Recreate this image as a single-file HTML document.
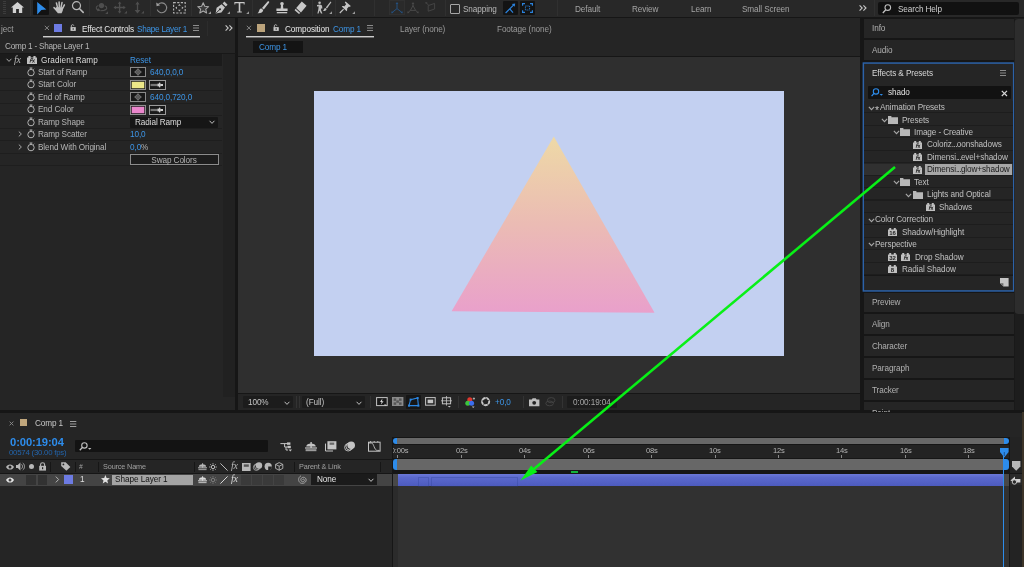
<!DOCTYPE html>
<html><head><meta charset="utf-8"><title>After Effects</title>
<style>
*{box-sizing:border-box;margin:0;padding:0}
html,body{width:1024px;height:567px;overflow:hidden;background:#161616}
body{position:relative;font-family:"Liberation Sans",sans-serif;font-size:8.2px;color:#b4b4b4;line-height:10px;-webkit-font-smoothing:antialiased}
.a{position:absolute}
.t{position:absolute;white-space:nowrap;line-height:10px;height:10px}
.w{color:#e0e0e0}
.b{color:#3d95e6}
.d{color:#8a8a8a}
svg{position:absolute;overflow:visible}
.t{will-change:transform}
/* regions */
#toolbar{left:0;top:0;width:1024px;height:17px;background:#282828}
#left{left:0;top:18px;width:235px;height:392px;background:#252525}
#comp{left:238px;top:18px;width:622px;height:392px;background:#252525}
#viewer{left:238px;top:57px;width:622px;height:335.5px;background:#2f2f2f}
#right{left:862px;top:18px;width:162px;height:392px;background:#161616}
#timeline{left:0;top:412px;width:1024px;height:155px;background:#252525}
.rp{left:0;width:152px;height:20px;background:#232323}
.row{left:0;width:100%;height:12px}
.sep{top:0;width:1px;height:16px;background:#303030}
.t{letter-spacing:-0.1px;margin-top:1px}
</style></head><body>

<!-- ============ TOOLBAR ============ -->
<div id="toolbar" class="a">
<!-- grip -->
<div class="a" style="left:3px;top:1px;width:3px;height:14px;background:repeating-linear-gradient(#3c3c3c 0 1px,#282828 1px 2px)"></div>
<!-- separators -->
<div class="a sep" style="left:30px"></div><div class="a sep" style="left:89px"></div><div class="a sep" style="left:150px"></div>
<div class="a sep" style="left:191px"></div><div class="a sep" style="left:252px"></div><div class="a sep" style="left:312px"></div>
<div class="a sep" style="left:335px"></div><div class="a sep" style="left:374px"></div><div class="a sep" style="left:445px"></div>
<div class="a sep" style="left:557px"></div><div class="a sep" style="left:874px"></div>
<!-- home -->
<svg style="left:11px;top:2px" width="13" height="11" viewBox="0 0 13 11"><path d="M6.5 0 L13 5.6 H11.2 V11 H7.9 V7 H5.1 V11 H1.8 V5.6 H0 Z" fill="#d2d2d2"/></svg>
<!-- selection tool -->
<div class="a" style="left:33px;top:0;width:16px;height:15px;background:#121212;border-radius:1px"></div>
<svg style="left:37px;top:1.6px" width="10" height="13" viewBox="0 0 10 13"><path d="M0.2 0 L9.4 7.6 L4.4 8 L0.2 12.4 Z" fill="#2d8ceb"/></svg>
<!-- hand -->
<svg style="left:53px;top:1px" width="13" height="13" viewBox="0 0 13 13"><g stroke="#bebebe" stroke-width="1.5" stroke-linecap="round" fill="none"><path d="M4.6 6.6 L3.4 1.9"/><path d="M6.3 6.2 L6.1 0.9"/><path d="M8 6.4 L9 1.6"/><path d="M9.6 7.4 L11.4 3.8"/><path d="M3.8 9.4 L1 6.6"/></g><path d="M3.6 6 L10.2 6.6 C10 9.4 9.4 11 8.6 12.2 H4.8 C3.6 10.8 2.4 9.4 1.8 7.6 Z" fill="#bebebe"/></svg>
<!-- zoom -->
<svg style="left:71px;top:0.2px" width="14" height="14" viewBox="0 0 14 14"><circle cx="5.5" cy="5.7" r="4" fill="none" stroke="#b8b8b8" stroke-width="1.2"/><path d="M8.6 8.8 L12.2 12.4" stroke="#b8b8b8" stroke-width="1.6" stroke-linecap="round"/></svg>
<!-- orbit (dim) -->
<svg style="left:95px;top:1px" width="14" height="14" viewBox="0 0 14 14"><circle cx="6.5" cy="4.6" r="2.6" fill="#4e4e4e"/><path d="M3.4 4.5 C0.3 5.6 0.6 8.2 3.6 9.2 M2.2 9.6 L4.4 9.4 L3.2 7.6 M9.6 4.8 C12.6 5.6 12.6 8.6 9 9.4 L5.5 9.8" fill="none" stroke="#4e4e4e" stroke-width="1.1"/><path d="M13 10.2 V13 H10.2 Z" fill="#4e4e4e"/></svg>
<!-- pan (dim) -->
<svg style="left:114px;top:2px" width="14" height="13" viewBox="0 0 14 13"><path d="M5.6 0.8 V10.2 M0.9 5.5 H10.3" stroke="#4e4e4e" stroke-width="1.3"/><path d="M5.6 -0.6 L7.4 1.8 H3.8 Z M5.6 11.6 L7.4 9.2 H3.8 Z M-0.5 5.5 L1.9 3.7 V7.3 Z M11.7 5.5 L9.3 3.7 V7.3 Z" fill="#4e4e4e"/><path d="M13 8.8 V11.6 H10.2 Z" fill="#4e4e4e"/></svg>
<!-- dolly (dim) -->
<svg style="left:133px;top:2px" width="14" height="13" viewBox="0 0 14 13"><path d="M4.5 1 V10" stroke="#4e4e4e" stroke-width="1.3"/><path d="M4.5 -0.4 L6.6 2.6 H2.4 Z M4.5 11.6 L7.4 8 H1.6 Z" fill="#4e4e4e"/><path d="M11 8.8 V11.6 H8.2 Z" fill="#4e4e4e"/></svg>
<!-- rotate -->
<svg style="left:155px;top:1px" width="14" height="14" viewBox="0 0 14 14"><path d="M3.2 3.4 A4.9 4.9 0 1 1 2.2 8.6" fill="none" stroke="#8c8c8c" stroke-width="1.1"/><path d="M1.2 1.4 L1.6 5.2 L5.2 4.2 Z" fill="#a0a0a0"/></svg>
<!-- pan behind -->
<svg style="left:173px;top:2px" width="13" height="12" viewBox="0 0 13 12"><rect x="0.6" y="0.6" width="11.6" height="10.4" fill="none" stroke="#b4b4b4" stroke-width="1.1" stroke-dasharray="2.2 1.4"/><path d="M6.4 2 L7.8 3.8 H5 Z M6.4 9.6 L7.8 7.8 H5 Z M2.2 5.8 L4 4.4 V7.2 Z M10.6 5.8 L8.8 4.4 V7.2 Z" fill="#b4b4b4"/></svg>
<!-- star -->
<svg style="left:196px;top:1px" width="16" height="14" viewBox="0 0 16 14"><g transform="translate(7.2 6.9) scale(0.88) translate(-7 -6.6)"><path d="M7 0.8 L8.8 4.8 L13.2 5.2 L9.9 8.1 L10.9 12.4 L7 10.1 L3.1 12.4 L4.1 8.1 L0.8 5.2 L5.2 4.8 Z" fill="#3c3c3c" stroke="#a8a8a8" stroke-width="1.2" stroke-linejoin="round"/></g><path d="M15 10.2 V13 H12.2 Z" fill="#9a9a9a"/></svg>
<!-- pen -->
<svg style="left:215px;top:1px" width="16" height="14" viewBox="0 0 16 14"><path d="M0.6 12.6 L1.6 6.8 L6.6 3.2 L10 6.6 L6.4 11.6 Z" fill="#c4c4c4"/><path d="M0.8 12.4 L4.6 8.6" stroke="#262626" stroke-width="0.9"/><circle cx="5" cy="8.2" r="1" fill="#262626"/><path d="M7.6 2.4 L9.4 0.6 L12.6 3.8 L10.8 5.6 Z" fill="#c4c4c4"/><path d="M15 10.2 V13 H12.2 Z" fill="#9a9a9a"/></svg>
<!-- T -->
<svg style="left:234px;top:2px" width="16" height="13" viewBox="0 0 16 13"><path d="M0.4 0 H10.6 V2.6 H9.7 V1.2 H6.3 V9.6 H7.8 V10.6 H3.2 V9.6 H4.7 V1.2 H1.3 V2.6 H0.4 Z" fill="#c8c8c8"/><path d="M15 9.2 V12 H12.2 Z" fill="#9a9a9a"/></svg>
<!-- brush -->
<svg style="left:257px;top:1px" width="13" height="13" viewBox="0 0 13 13"><path d="M11.6 0.3 C12.4 0.6 12.4 1.2 12 1.8 L6.8 8.4 L5 7 L10.4 0.8 C10.8 0.3 11.2 0.2 11.6 0.3 Z" fill="#c8c8c8"/><path d="M4.4 7.6 L6.2 9 C6 11.4 3.4 12.6 0.4 12.2 C1.6 11.4 1.8 10.6 2.2 9.4 C2.6 8.2 3.4 7.6 4.4 7.6 Z" fill="#c8c8c8"/></svg>
<!-- stamp -->
<svg style="left:276px;top:2px" width="12" height="12" viewBox="0 0 12 12"><circle cx="6" cy="1.8" r="1.8" fill="#c8c8c8"/><path d="M5 3 H7 L7.3 6.6 H11.6 V9 H0.4 V6.6 H4.7 Z" fill="#c8c8c8"/><rect x="0.8" y="10" width="10.4" height="1.3" fill="#c8c8c8"/></svg>
<!-- eraser -->
<svg style="left:294px;top:1px" width="13" height="13" viewBox="0 0 13 13"><path d="M7.8 0.4 L12.6 4.8 L7 11.4 L2.2 7 Z" fill="#c8c8c8"/><path d="M1.6 7.8 L6.2 12 L5 13 L0.6 9.2 Z" fill="#c8c8c8"/></svg>
<!-- roto -->
<svg style="left:316px;top:1px" width="17" height="14" viewBox="0 0 17 14"><circle cx="3.6" cy="1.8" r="1.3" fill="#bcbcbc"/><path d="M1 4 L4 3.4 L6 4.6 L6.4 7.6 L5.2 7.6 L5 9 L6.4 12.4 H5 L3.4 9.4 L2.6 12.4 H1.4 L2.4 8 L2.6 5.2 L1 5.4 Z" fill="#bcbcbc"/><path d="M14.6 0.6 L15.4 1.2 L11 7.4 L9.8 6.6 Z" fill="#bcbcbc"/><path d="M9.4 7 L10.6 8 C10.4 9.8 8.6 10.4 6.8 10 C7.8 9.4 7.8 8.6 8.2 7.8 C8.5 7.2 9 7 9.4 7 Z" fill="#bcbcbc"/><path d="M16 10.2 V13 H13.2 Z" fill="#9a9a9a"/></svg>
<!-- pin -->
<svg style="left:339px;top:1px" width="17" height="14" viewBox="0 0 17 14"><path d="M6.6 0.6 L11.8 5.2 L10.8 6.2 L10 5.8 L8 8 C8.4 9 8.2 9.8 7.6 10.4 L2.8 5.8 C3.6 5.2 4.4 5.2 5.2 5.6 L7.2 3.4 L5.8 1.6 Z" fill="#c4c4c4" transform="translate(0 -0.2)"/><path d="M4.6 8.2 L0.8 12" stroke="#c4c4c4" stroke-width="1.2"/><path d="M16 10.2 V13 H13.2 Z" fill="#9a9a9a"/></svg>
<!-- axis modes -->
<div class="a" style="left:389px;top:0;width:16px;height:15px;border:1px solid #303030;background:#2a2a2a"></div>
<svg style="left:391px;top:2px" width="13" height="12" viewBox="0 0 13 12"><path d="M6 1 V6.6 L1.2 10.4 M6 6.6 L10.8 10.4" fill="none" stroke="#24507f" stroke-width="1"/><path d="M6 0 L7.4 2 H4.6 Z M0.2 11.2 L0.8 8.9 L2.5 11 Z M11.8 11.2 L11.2 8.9 L9.5 11 Z" fill="#24507f"/></svg>
<svg style="left:407px;top:2px" width="13" height="12" viewBox="0 0 13 12"><path d="M6 1 V4 M3.8 8 L1.2 10.4 M8.2 8 L10.8 10.4 M6 3.6 L3.4 8.4 H8.6 Z" fill="none" stroke="#484848" stroke-width="1"/><path d="M6 0 L7.4 2 H4.6 Z M0.2 11.2 L0.8 8.9 L2.5 11 Z M11.8 11.2 L11.2 8.9 L9.5 11 Z" fill="#484848"/></svg>
<svg style="left:425px;top:2px" width="12" height="11" viewBox="0 0 12 11"><path d="M1 0.6 L3.4 3 M3.2 3.6 L9.6 1.4 V7 L3.2 9.2 Z" fill="none" stroke="#444" stroke-width="1"/><path d="M0.4 0 L2.6 0.4 L0.8 2.2 Z" fill="#444"/></svg>
<!-- snapping -->
<div class="a" style="left:450px;top:4px;width:10px;height:10px;border:1.3px solid #a6a6a6;border-radius:1px"></div>
<div class="t" style="left:463px;top:4px;color:#b8b8b8">Snapping</div>
<div class="a" style="left:503px;top:1px;width:15px;height:14px;background:#131313;border-radius:1px"></div>
<svg style="left:505px;top:3px" width="11" height="11" viewBox="0 0 11 11"><path d="M0.6 10 L9 1.6 M4.8 5.8 L8 9.6" fill="none" stroke="#2b82dc" stroke-width="1.2"/><path d="M10.2 0.4 L9.6 3.8 L6.8 1 Z" fill="#2b82dc"/></svg>
<div class="a" style="left:520px;top:1px;width:15px;height:14px;background:#131313;border-radius:1px"></div>
<svg style="left:522px;top:3px" width="11" height="10" viewBox="0 0 11 10"><path d="M0.6 2.8 V0.6 H3 M8 0.6 H10.4 V2.8 M10.4 7.2 V9.4 H8 M3 9.4 H0.6 V7.2" fill="none" stroke="#2b82dc" stroke-width="1.2"/><rect x="3.4" y="3" width="4.2" height="4" fill="none" stroke="#2b82dc" stroke-width="0.9" stroke-dasharray="1.2 0.8"/></svg>
<!-- workspaces -->
<div class="t" style="left:575px;top:4px;color:#a4a4a4">Default</div>
<div class="t" style="left:632px;top:4px;color:#a4a4a4">Review</div>
<div class="t" style="left:691px;top:4px;color:#a4a4a4">Learn</div>
<div class="t" style="left:742px;top:4px;color:#a4a4a4">Small Screen</div>
<svg style="left:859px;top:5px" width="8" height="6" viewBox="0 0 8 6"><path d="M0.6 0.4 L3.2 3 L0.6 5.6 M4.4 0.4 L7 3 L4.4 5.6" fill="none" stroke="#c8c8c8" stroke-width="1.1"/></svg>
<!-- search help -->
<div class="a" style="left:878px;top:2px;width:141px;height:13px;background:#111;border-radius:2px"></div>
<svg style="left:882px;top:4px" width="10" height="10" viewBox="0 0 10 10"><circle cx="5.8" cy="3.6" r="2.8" fill="none" stroke="#c0c0c0" stroke-width="1.1"/><path d="M3.8 5.8 L0.8 9" stroke="#c0c0c0" stroke-width="1.3"/></svg>
<div class="t" style="left:898px;top:4px;color:#d0d0d0">Search Help</div>
</div>

<!-- ============ LEFT PANEL ============ -->
<div id="left" class="a">
<!-- tab header (coords relative to panel: top=18) -->
<div class="t" style="left:1.2px;top:5.7px;color:#a0a0a0">ject</div>
<svg style="left:44px;top:7px" width="6" height="6" viewBox="0 0 6 6"><path d="M0.8 0.8 L5 5 M5 0.8 L0.8 5" stroke="#8c8c8c" stroke-width="0.9"/></svg>
<div class="a" style="left:54px;top:6px;width:8px;height:8px;background:#6d7be3"></div>
<svg style="left:70px;top:5.6px" width="6.6" height="7.4" viewBox="0 0 8 9"><path d="M1.6 4 V2.2 C1.6 0.4 4.6 0.4 4.6 2" fill="none" stroke="#c8c8c8" stroke-width="1"/><rect x="0.6" y="3.8" width="6.4" height="4.6" fill="#c8c8c8"/><rect x="3.2" y="5.2" width="1.3" height="1.8" fill="#222"/></svg>
<div class="t w" style="left:82px;top:5.7px;color:#eaeaea">Effect Controls</div>
<div class="t b" style="left:137px;top:5.7px;letter-spacing:-0.25px">Shape Layer 1</div>
<svg style="left:193px;top:7px" width="6.0" height="6" viewBox="0 0 6.0 6"><path d="M0 0.5 H6.0 M0 3 H6.0 M0 5.5 H6.0" stroke="#8c8c8c" stroke-width="1"/></svg>
<div class="a" style="left:207px;top:3px;width:1px;height:15px;background:#2c2c2c"></div>
<svg style="left:225px;top:7px" width="8" height="6" viewBox="0 0 8 6"><path d="M0.6 0.4 L3.2 3 L0.6 5.6 M4.4 0.4 L7 3 L4.4 5.6" fill="none" stroke="#c8c8c8" stroke-width="1.1"/></svg>
<div class="a" style="left:43px;top:18px;width:157px;height:1px;background:#cccccc"></div><div class="a" style="left:43px;top:19px;width:157px;height:1px;background:#6e6e6e"></div>
<!-- content -->
<div class="a" style="left:222.6px;top:35.5px;width:12.4px;height:343px;background:#212121"></div>
<div class="t" style="left:5px;top:23px;color:#b6b6b6;letter-spacing:-0.22px">Comp 1 - Shape Layer 1</div>
<div class="a" style="left:0;top:34.5px;width:236px;height:1px;background:#181818"></div>
<div id="fxrows" class="a" style="left:0;top:35.5px;width:222px;height:113px;background:repeating-linear-gradient(#252525 0 11.45px,#1e1e1e 11.45px 12.45px)"></div>
<div class="a" style="left:0;top:35.5px;width:222px;height:12px;background:#1b1b1b"></div>
<svg style="left:6px;top:40.0px" width="6" height="5" viewBox="0 0 6 5"><path d="M0.6 0.8 L3 3.4 L5.4 0.8" fill="none" stroke="#a8a8a8" stroke-width="1"/></svg>
<div class="t" style="left:14px;top:36.0px;font-family:'Liberation Serif',serif;font-style:italic;font-size:10px;color:#b4b4b4;letter-spacing:-0.4px">fx</div>
<svg style="left:27px;top:37.7px" width="10" height="8" viewBox="0 0 10 8"><path d="M0 1.4 H1.4 V0 H3.6 V1.4 H6.4 V0 H8.6 V1.4 H10 V8 H0 Z" fill="#c0c0c0"/><path d="M3 6.6 L4 2.6 H6.2 M3.4 4.4 H5.6 M5.4 6.6 L7.6 3.4 M5.6 3.4 L7.4 6.6" stroke="#1b1b1b" stroke-width="0.8" fill="none"/></svg>
<div class="t" style="left:41px;top:36.5px;color:#dadada;letter-spacing:0.11px">Gradient Ramp</div>
<div class="t b" style="left:130px;top:36.5px">Reset</div>
<svg style="left:27px;top:48.95px" width="8" height="10" viewBox="0 0 8 10"><circle cx="4" cy="5.6" r="3.2" fill="none" stroke="#b0b0b0" stroke-width="1"/><path d="M2.6 1 H5.4 M4 1 V2.4 M6.4 2.6 L7.2 1.8" stroke="#b0b0b0" stroke-width="1" fill="none"/></svg>
<div class="t" style="left:38px;top:48.95px;color:#b6b6b6">Start of Ramp</div>
<svg style="left:27px;top:61.4px" width="8" height="10" viewBox="0 0 8 10"><circle cx="4" cy="5.6" r="3.2" fill="none" stroke="#b0b0b0" stroke-width="1"/><path d="M2.6 1 H5.4 M4 1 V2.4 M6.4 2.6 L7.2 1.8" stroke="#b0b0b0" stroke-width="1" fill="none"/></svg>
<div class="t" style="left:38px;top:61.4px;color:#b6b6b6">Start Color</div>
<svg style="left:27px;top:73.85px" width="8" height="10" viewBox="0 0 8 10"><circle cx="4" cy="5.6" r="3.2" fill="none" stroke="#b0b0b0" stroke-width="1"/><path d="M2.6 1 H5.4 M4 1 V2.4 M6.4 2.6 L7.2 1.8" stroke="#b0b0b0" stroke-width="1" fill="none"/></svg>
<div class="t" style="left:38px;top:73.85px;color:#b6b6b6">End of Ramp</div>
<svg style="left:27px;top:86.3px" width="8" height="10" viewBox="0 0 8 10"><circle cx="4" cy="5.6" r="3.2" fill="none" stroke="#b0b0b0" stroke-width="1"/><path d="M2.6 1 H5.4 M4 1 V2.4 M6.4 2.6 L7.2 1.8" stroke="#b0b0b0" stroke-width="1" fill="none"/></svg>
<div class="t" style="left:38px;top:86.3px;color:#b6b6b6">End Color</div>
<svg style="left:27px;top:98.75px" width="8" height="10" viewBox="0 0 8 10"><circle cx="4" cy="5.6" r="3.2" fill="none" stroke="#b0b0b0" stroke-width="1"/><path d="M2.6 1 H5.4 M4 1 V2.4 M6.4 2.6 L7.2 1.8" stroke="#b0b0b0" stroke-width="1" fill="none"/></svg>
<div class="t" style="left:38px;top:98.75px;color:#b6b6b6">Ramp Shape</div>
<svg style="left:27px;top:111.2px" width="8" height="10" viewBox="0 0 8 10"><circle cx="4" cy="5.6" r="3.2" fill="none" stroke="#b0b0b0" stroke-width="1"/><path d="M2.6 1 H5.4 M4 1 V2.4 M6.4 2.6 L7.2 1.8" stroke="#b0b0b0" stroke-width="1" fill="none"/></svg>
<div class="t" style="left:38px;top:111.2px;color:#b6b6b6">Ramp Scatter</div>
<svg style="left:18px;top:113.4px" width="5" height="6" viewBox="0 0 5 6"><path d="M0.8 0.6 L3.4 3 L0.8 5.4" fill="none" stroke="#a8a8a8" stroke-width="1"/></svg>
<svg style="left:27px;top:123.65px" width="8" height="10" viewBox="0 0 8 10"><circle cx="4" cy="5.6" r="3.2" fill="none" stroke="#b0b0b0" stroke-width="1"/><path d="M2.6 1 H5.4 M4 1 V2.4 M6.4 2.6 L7.2 1.8" stroke="#b0b0b0" stroke-width="1" fill="none"/></svg>
<div class="t" style="left:38px;top:123.65px;color:#b6b6b6">Blend With Original</div>
<svg style="left:18px;top:125.85000000000001px" width="5" height="6" viewBox="0 0 5 6"><path d="M0.8 0.6 L3.4 3 L0.8 5.4" fill="none" stroke="#a8a8a8" stroke-width="1"/></svg>
<div class="a" style="left:130px;top:49.15px;width:16px;height:10px;border:1px solid #8a8a8a;background:#181818"></div>
<svg style="left:134px;top:50.15px" width="8" height="8" viewBox="0 0 8 8"><circle cx="4" cy="4" r="2.3" fill="none" stroke="#b4b4b4" stroke-width="0.6"/><path d="M4 0.2 V7.8 M0.2 4 H7.8" stroke="#b4b4b4" stroke-width="0.5"/></svg>
<div class="t b" style="left:150px;top:48.949999999999996px">640,0,0,0</div>
<div class="a" style="left:130px;top:61.6px;width:16px;height:10px;border:1px solid #8e8e8e;box-shadow:inset 0 0 0 0.7px #1c1c1c;background:#ece788"></div>
<div class="a" style="left:148.5px;top:61.6px;width:17px;height:10px;border:1px solid #9a9a9a;background:#1a1a1a"></div>
<svg style="left:150px;top:63.6px" width="14" height="6" viewBox="0 0 14 6"><path d="M0.5 2.4 H8 M0.5 3.6 H8" stroke="#c8c8c8" stroke-width="0.6"/><rect x="7.6" y="1.6" width="3" height="2.8" fill="#d0d0d0"/><rect x="9" y="0.6" width="1.2" height="4.8" fill="#d0d0d0"/><rect x="10.4" y="2" width="2.6" height="2" fill="#d0d0d0"/></svg>
<div class="a" style="left:130px;top:74.05px;width:16px;height:10px;border:1px solid #8a8a8a;background:#181818"></div>
<svg style="left:134px;top:75.05px" width="8" height="8" viewBox="0 0 8 8"><circle cx="4" cy="4" r="2.3" fill="none" stroke="#b4b4b4" stroke-width="0.6"/><path d="M4 0.2 V7.8 M0.2 4 H7.8" stroke="#b4b4b4" stroke-width="0.5"/></svg>
<div class="t b" style="left:150px;top:73.85px">640,0,720,0</div>
<div class="a" style="left:130px;top:86.5px;width:16px;height:10px;border:1px solid #8e8e8e;box-shadow:inset 0 0 0 0.7px #1c1c1c;background:#ea86cc"></div>
<div class="a" style="left:148.5px;top:86.5px;width:17px;height:10px;border:1px solid #9a9a9a;background:#1a1a1a"></div>
<svg style="left:150px;top:88.5px" width="14" height="6" viewBox="0 0 14 6"><path d="M0.5 2.4 H8 M0.5 3.6 H8" stroke="#c8c8c8" stroke-width="0.6"/><rect x="7.6" y="1.6" width="3" height="2.8" fill="#d0d0d0"/><rect x="9" y="0.6" width="1.2" height="4.8" fill="#d0d0d0"/><rect x="10.4" y="2" width="2.6" height="2" fill="#d0d0d0"/></svg>
<div class="a" style="left:130px;top:98.55px;width:88px;height:11px;background:#161616;border-radius:1px"></div>
<div class="t" style="left:135px;top:98.75px;color:#dcdcdc">Radial Ramp</div>
<svg style="left:209px;top:102.15px" width="6" height="5" viewBox="0 0 6 5"><path d="M0.6 0.8 L3 3.4 L5.4 0.8" fill="none" stroke="#c0c0c0" stroke-width="1"/></svg>
<div class="t b" style="left:130px;top:111.2px">10,0</div>
<div class="t b" style="left:130px;top:123.65px">0,0<span style="color:#b0b0b0">%</span></div>
<div class="a" style="left:130px;top:136px;width:88.5px;height:11px;border:1px solid #8c8c8c;background:#1d1d1d"></div>
<div class="t" style="left:130px;top:136.5px;width:88px;text-align:center;color:#b4b4b4">Swap Colors</div>
</div>

<!-- ============ COMP PANEL ============ -->
<div id="comp" class="a">
<!-- header; coords relative to (238,18) -->
<svg style="left:8px;top:7px" width="6" height="6" viewBox="0 0 6 6"><path d="M0.8 0.8 L5 5 M5 0.8 L0.8 5" stroke="#8c8c8c" stroke-width="0.9"/></svg>
<div class="a" style="left:19px;top:6px;width:8px;height:8px;background:#bca47c"></div>
<svg style="left:35px;top:5.6px" width="6.6" height="7.4" viewBox="0 0 8 9"><path d="M1.6 4 V2.2 C1.6 0.4 4.6 0.4 4.6 2" fill="none" stroke="#c8c8c8" stroke-width="1"/><rect x="0.6" y="3.8" width="6.4" height="4.6" fill="#c8c8c8"/><rect x="3.2" y="5.2" width="1.3" height="1.8" fill="#222"/></svg>
<div class="t" style="left:47px;top:5.7px;color:#eaeaea">Composition</div>
<div class="t b" style="left:95px;top:5.7px">Comp 1</div>
<svg style="left:129px;top:7px" width="6.0" height="6" viewBox="0 0 6.0 6"><path d="M0 0.5 H6.0 M0 3 H6.0 M0 5.5 H6.0" stroke="#8c8c8c" stroke-width="1"/></svg>
<div class="a" style="left:8px;top:18px;width:128px;height:1px;background:#cccccc"></div><div class="a" style="left:8px;top:19px;width:128px;height:1px;background:#6e6e6e"></div>
<div class="t" style="left:162px;top:5.7px;color:#9a9a9a">Layer (none)</div>
<div class="t" style="left:259px;top:5.7px;color:#9a9a9a">Footage (none)</div>
<!-- sub tab -->
<div class="a" style="left:15px;top:23px;width:50px;height:11.5px;background:#141414"></div>
<div class="t b" style="left:21px;top:23.5px">Comp 1</div>
<div class="a" style="left:0;top:38px;width:622px;height:1px;background:#161616"></div>
<!-- bottom bar : relative top = y-18 -->
<div class="a" style="left:0;top:374.5px;width:622px;height:1px;background:#161616"></div>
<div class="a" style="left:5px;top:377.5px;width:50px;height:12.5px;background:#1c1c1c;border-radius:1px"></div>
<div class="t" style="left:9.5px;top:378.5px;color:#c4c4c4">100%</div>
<svg style="left:46px;top:382.5px" width="6" height="5" viewBox="0 0 6 5"><path d="M0.6 0.8 L3 3.4 L5.4 0.8" fill="none" stroke="#c0c0c0" stroke-width="1"/></svg>
<div class="a" style="left:57.5px;top:378px;width:1px;height:12px;background:#333"></div>
<div class="a" style="left:61px;top:378px;width:1px;height:12px;background:#333"></div>
<div class="a" style="left:64px;top:377.5px;width:63px;height:12.5px;background:#1c1c1c;border-radius:1px"></div>
<div class="t" style="left:67.5px;top:378.5px;color:#c4c4c4">(Full)</div>
<svg style="left:118px;top:382.5px" width="6" height="5" viewBox="0 0 6 5"><path d="M0.6 0.8 L3 3.4 L5.4 0.8" fill="none" stroke="#c0c0c0" stroke-width="1"/></svg>
<div class="a" style="left:131.5px;top:378px;width:1px;height:12px;background:#333"></div>
<!-- fast preview -->
<svg style="left:137.5px;top:379px" width="12" height="10" viewBox="0 0 12 10"><rect x="0.6" y="0.6" width="10.6" height="8" fill="#1a1a1a" stroke="#c4c4c4" stroke-width="1"/><path d="M6.4 1.6 L4 5 H5.6 L4.8 7.8 L7.6 4.2 H6 Z" fill="#d8d8d8"/><path d="M8 7.4 H10.4 L9.2 9 Z" fill="#d8d8d8"/></svg>
<!-- transparency grid -->
<svg style="left:154px;top:379px" width="12" height="10" viewBox="0 0 12 10"><rect x="0" y="0" width="11.4" height="9" fill="#8a8a8a"/><rect x="1.6" y="1.4" width="2.6" height="2.4" fill="#555"/><rect x="7" y="1.4" width="2.6" height="2.4" fill="#555"/><rect x="4.3" y="3.4" width="2.6" height="2.4" fill="#555"/><rect x="1.6" y="5.4" width="2.6" height="2.4" fill="#555"/><rect x="7" y="5.4" width="2.6" height="2.4" fill="#555"/></svg>
<!-- mask path (active) -->
<div class="a" style="left:168px;top:377px;width:15px;height:13.5px;background:#161616;border-radius:1px"></div>
<svg style="left:170px;top:379px" width="12" height="10" viewBox="0 0 12 10"><path d="M1 8.6 L2.6 2.6 L9.6 1 L10.4 8.6 Z" fill="none" stroke="#2b86e2" stroke-width="1.1"/><rect x="0" y="7.6" width="2" height="2" fill="#2b86e2"/><rect x="9.4" y="7.6" width="2" height="2" fill="#2b86e2"/><rect x="1.6" y="1.6" width="2" height="2" fill="#2b86e2"/><rect x="8.6" y="0" width="2" height="2" fill="#2b86e2"/></svg>
<!-- region of interest -->
<svg style="left:186.5px;top:379px" width="12" height="10" viewBox="0 0 12 10"><rect x="0.6" y="0.6" width="9.6" height="7.6" fill="none" stroke="#c4c4c4" stroke-width="1"/><rect x="2.6" y="2.6" width="5.6" height="3.6" fill="#c4c4c4"/></svg>
<!-- guides -->
<svg style="left:202.5px;top:378px" width="12" height="12" viewBox="0 0 12 12"><rect x="1.4" y="1.8" width="8.2" height="6" fill="none" stroke="#c4c4c4" stroke-width="1"/><path d="M5.5 0 V9.6 M0 4.8 H11" stroke="#c4c4c4" stroke-width="0.8"/><path d="M6.8 10 H9.8 L8.3 11.6 Z" fill="#c4c4c4"/></svg>
<div class="a" style="left:219.5px;top:378px;width:1px;height:12px;background:#333"></div>
<!-- RGB -->
<svg style="left:227px;top:378.5px" width="12" height="12" viewBox="0 0 12 12"><circle cx="4.8" cy="2.8" r="2.5" fill="#e0382e"/><circle cx="2.8" cy="6.2" r="2.5" fill="#3cc43c"/><circle cx="6.6" cy="6.2" r="2.5" fill="#3c6ef0"/><path d="M7.8 1.6 H10 M8.9 0.5 V2.7" stroke="#c4c4c4" stroke-width="0.8"/><path d="M6.8 9.6 H9.6 L8.2 11 Z" fill="#c4c4c4"/></svg>
<!-- aperture -->
<svg style="left:243px;top:379px" width="10" height="10" viewBox="0 0 10 10"><circle cx="4.6" cy="4.6" r="3.6" fill="none" stroke="#c8c8c8" stroke-width="1.9"/><path d="M4.6 0.4 L6 3.6 M8.6 3 L5.4 4.6 M7.6 7.6 L4.6 5.8 M2.6 8.4 L3.6 5.2 M0.6 4 L3.8 4.2" stroke="#232323" stroke-width="0.7"/></svg>
<div class="t b" style="left:257px;top:378.5px">+0,0</div>
<div class="a" style="left:284.5px;top:378px;width:1px;height:12px;background:#333"></div>
<!-- camera -->
<svg style="left:291px;top:379.5px" width="11" height="9" viewBox="0 0 11 9"><path d="M0 1.6 H2.8 L3.6 0.2 H6.8 L7.6 1.6 H10.4 V8.2 H0 Z" fill="#bdbdbd"/><circle cx="5.2" cy="4.8" r="1.9" fill="#232323"/></svg>
<svg style="left:307px;top:379px" width="11" height="10" viewBox="0 0 11 10"><ellipse cx="6.2" cy="3.2" rx="3.8" ry="2.6" fill="none" stroke="#444" stroke-width="0.9"/><ellipse cx="4.6" cy="6.4" rx="3.8" ry="2.4" fill="none" stroke="#444" stroke-width="0.9"/></svg>
<div class="a" style="left:323.5px;top:378px;width:1px;height:12px;background:#333"></div>
<div class="a" style="left:328.5px;top:377.5px;width:50px;height:12.5px;background:#1c1c1c;border-radius:1px"></div>
<div class="t" style="left:334.5px;top:378.5px;color:#a4a4a4">0:00:19:04</div>
</div>
<div id="viewer" class="a">
<div class="a" style="left:76px;top:34px;width:469.5px;height:264.5px;background:#c3d0f1"></div>
<svg style="left:0;top:0" width="622" height="335" viewBox="238 57 622 335"><defs><linearGradient id="tg" x1="0" y1="0" x2="0" y2="1"><stop offset="0" stop-color="#eed9a6"/><stop offset="0.5" stop-color="#ebbbb4"/><stop offset="1" stop-color="#e9a0cb"/></linearGradient></defs><polygon points="553.8,136.6 451.6,311.2 654.6,312.8" fill="url(#tg)"/></svg>
</div>

<!-- ============ RIGHT PANELS ============ -->
<div id="right" class="a">
<div class="a" style="left:1.5px;top:0.5px;width:150.5px;height:19.8px;background:#252525"></div>
<div class="t" style="left:9.5px;top:5.2px;color:#b0b0b0">Info</div>
<div class="a" style="left:1.5px;top:22px;width:150.5px;height:20.2px;background:#252525"></div>
<div class="t" style="left:9.5px;top:26.9px;color:#b0b0b0">Audio</div>
<div class="a" style="left:1px;top:45px;width:151px;height:228px;background:#252525"></div>
<svg style="left:0;top:0" width="162" height="392" viewBox="0 0 162 392"><rect x="1.35" y="45.05" width="150.3" height="227.9" fill="none" stroke="#2c62a8" stroke-width="1.5"/></svg>
<div class="t" style="left:9.5px;top:49.5px;color:#d8d8d8">Effects &amp; Presets</div>
<svg style="left:138px;top:52px" width="6.0" height="6" viewBox="0 0 6.0 6"><path d="M0 0.5 H6.0 M0 3 H6.0 M0 5.5 H6.0" stroke="#8c8c8c" stroke-width="1"/></svg>
<div class="a" style="left:5.5px;top:67.5px;width:143px;height:13.5px;background:#121212;border-radius:1px"></div>
<svg style="left:9px;top:70px" width="13" height="9" viewBox="0 0 13 9"><circle cx="5" cy="3.4" r="2.7" fill="none" stroke="#2d8ceb" stroke-width="1.1"/><path d="M3 5.4 L0.6 8.2" stroke="#2d8ceb" stroke-width="1.3"/><path d="M8.6 6 H12 L10.3 7.8 Z" fill="#2d8ceb"/></svg>
<div class="t" style="left:25.5px;top:69px;color:#e0e0e0">shado</div>
<svg style="left:139px;top:71.5px" width="7" height="7" viewBox="0 0 7 7"><path d="M0.8 0.8 L6 6 M6 0.8 L0.8 6" stroke="#d8d8d8" stroke-width="1.2"/></svg>
<div class="a" style="left:2px;top:83px;width:149px;height:174.3px;background:repeating-linear-gradient(#252525 0 11.2px,#1d1d1d 11.2px 12.45px)"></div>
<div class="a" style="left:2px;top:257px;width:149px;height:1.3px;background:#181818"></div>
<div class="a" style="left:2px;top:145.5px;width:149px;height:11.2px;background:#303030"></div>
<div class="a" style="left:62.8px;top:146px;width:87px;height:11px;background:#a6a6a6"></div>
<div class="t" style="left:18px;top:84.1px;color:#c0c0c0">Animation Presets</div>
<svg style="left:5.8px;top:87.5px" width="7" height="5.5" viewBox="0 0 6 5"><path d="M0.6 0.8 L3 3.4 L5.4 0.8" fill="none" stroke="#a8a8a8" stroke-width="1"/></svg>
<div class="t" style="left:12.5px;top:85.8px;color:#c0c0c0;font-size:10.5px">*</div>
<div class="t" style="left:40px;top:96.55px;color:#c0c0c0">Presets</div>
<svg style="left:18.7px;top:99.95px" width="7" height="5.5" viewBox="0 0 6 5"><path d="M0.6 0.8 L3 3.4 L5.4 0.8" fill="none" stroke="#a8a8a8" stroke-width="1"/></svg>
<svg style="left:26.4px;top:97.95px" width="10" height="8" viewBox="0 0 10 8"><path d="M0 0 H3.4 V1.2 H10 V8 H0 Z" fill="#b8b8b8"/></svg>
<div class="t" style="left:52px;top:109.0px;color:#c0c0c0">Image - Creative</div>
<svg style="left:30.7px;top:112.4px" width="7" height="5.5" viewBox="0 0 6 5"><path d="M0.6 0.8 L3 3.4 L5.4 0.8" fill="none" stroke="#a8a8a8" stroke-width="1"/></svg>
<svg style="left:38px;top:110.4px" width="10" height="8" viewBox="0 0 10 8"><path d="M0 0 H3.4 V1.2 H10 V8 H0 Z" fill="#b8b8b8"/></svg>
<div class="t" style="left:64.5px;top:121.45px;color:#c0c0c0">Coloriz<span style="letter-spacing:-0.6px">...</span>oonshadows</div>
<svg style="left:51.2px;top:122.65px" width="9" height="8" viewBox="0 0 9 8"><path d="M0 1.4 H1.2 V0 H3.2 V1.4 H5.8 V0 H7.8 V1.4 H9 V8 H0 Z" fill="#c0c0c0"/><path d="M3.2 6.8 L4 2.8 H5.8 M3.4 4.6 H5.2 M5 6.8 L7 3.8 M5.2 3.8 L6.8 6.8" stroke="#232323" stroke-width="0.8" fill="none"/></svg>
<div class="t" style="left:64.5px;top:133.9px;color:#c0c0c0">Dimensi<span style="letter-spacing:-0.6px">...</span>evel+shadow</div>
<svg style="left:51.2px;top:135.1px" width="9" height="8" viewBox="0 0 9 8"><path d="M0 1.4 H1.2 V0 H3.2 V1.4 H5.8 V0 H7.8 V1.4 H9 V8 H0 Z" fill="#c0c0c0"/><path d="M3.2 6.8 L4 2.8 H5.8 M3.4 4.6 H5.2 M5 6.8 L7 3.8 M5.2 3.8 L6.8 6.8" stroke="#232323" stroke-width="0.8" fill="none"/></svg>
<div class="t" style="left:64.5px;top:146.35px;color:#1a1a1a">Dimensi<span style="letter-spacing:-0.6px">...</span>glow+shadow</div>
<svg style="left:51.2px;top:147.55px" width="9" height="8" viewBox="0 0 9 8"><path d="M0 1.4 H1.2 V0 H3.2 V1.4 H5.8 V0 H7.8 V1.4 H9 V8 H0 Z" fill="#c0c0c0"/><path d="M3.2 6.8 L4 2.8 H5.8 M3.4 4.6 H5.2 M5 6.8 L7 3.8 M5.2 3.8 L6.8 6.8" stroke="#232323" stroke-width="0.8" fill="none"/></svg>
<div class="t" style="left:52px;top:158.8px;color:#c0c0c0">Text</div>
<svg style="left:30.7px;top:162.2px" width="7" height="5.5" viewBox="0 0 6 5"><path d="M0.6 0.8 L3 3.4 L5.4 0.8" fill="none" stroke="#a8a8a8" stroke-width="1"/></svg>
<svg style="left:38px;top:160.2px" width="10" height="8" viewBox="0 0 10 8"><path d="M0 0 H3.4 V1.2 H10 V8 H0 Z" fill="#b8b8b8"/></svg>
<div class="t" style="left:64.5px;top:171.25px;color:#c0c0c0">Lights and Optical</div>
<svg style="left:43.2px;top:174.65px" width="7" height="5.5" viewBox="0 0 6 5"><path d="M0.6 0.8 L3 3.4 L5.4 0.8" fill="none" stroke="#a8a8a8" stroke-width="1"/></svg>
<svg style="left:51px;top:172.65px" width="10" height="8" viewBox="0 0 10 8"><path d="M0 0 H3.4 V1.2 H10 V8 H0 Z" fill="#b8b8b8"/></svg>
<div class="t" style="left:76.8px;top:183.7px;color:#c0c0c0">Shadows</div>
<svg style="left:63.7px;top:184.9px" width="9" height="8" viewBox="0 0 9 8"><path d="M0 1.4 H1.2 V0 H3.2 V1.4 H5.8 V0 H7.8 V1.4 H9 V8 H0 Z" fill="#c0c0c0"/><path d="M3.2 6.8 L4 2.8 H5.8 M3.4 4.6 H5.2 M5 6.8 L7 3.8 M5.2 3.8 L6.8 6.8" stroke="#232323" stroke-width="0.8" fill="none"/></svg>
<div class="t" style="left:12.8px;top:196.15px;color:#c0c0c0">Color Correction</div>
<svg style="left:5.8px;top:199.55px" width="7" height="5.5" viewBox="0 0 6 5"><path d="M0.6 0.8 L3 3.4 L5.4 0.8" fill="none" stroke="#a8a8a8" stroke-width="1"/></svg>
<div class="t" style="left:39.5px;top:208.6px;color:#c0c0c0">Shadow/Highlight</div>
<svg style="will-change:transform;left:26.4px;top:209.8px" width="9" height="8" viewBox="0 0 9 8"><path d="M0 1.4 H1.2 V0 H3.2 V1.4 H5.8 V0 H7.8 V1.4 H9 V8 H0 Z" fill="#c0c0c0"/><text x="4.5" y="7" font-size="6" font-weight="bold" text-anchor="middle" fill="#232323" font-family="Liberation Sans, sans-serif">16</text></svg>
<div class="t" style="left:12.8px;top:221.05px;color:#c0c0c0">Perspective</div>
<svg style="left:5.8px;top:224.45px" width="7" height="5.5" viewBox="0 0 6 5"><path d="M0.6 0.8 L3 3.4 L5.4 0.8" fill="none" stroke="#a8a8a8" stroke-width="1"/></svg>
<div class="t" style="left:53px;top:233.5px;color:#c0c0c0">Drop Shadow</div>
<svg style="will-change:transform;left:26.4px;top:234.7px" width="9" height="8" viewBox="0 0 9 8"><path d="M0 1.4 H1.2 V0 H3.2 V1.4 H5.8 V0 H7.8 V1.4 H9 V8 H0 Z" fill="#c0c0c0"/><text x="4.5" y="7" font-size="6" font-weight="bold" text-anchor="middle" fill="#232323" font-family="Liberation Sans, sans-serif">32</text></svg>
<svg style="left:39px;top:234.7px" width="9" height="8" viewBox="0 0 9 8"><path d="M0 1.4 H1.2 V0 H3.2 V1.4 H5.8 V0 H7.8 V1.4 H9 V8 H0 Z" fill="#c0c0c0"/><path d="M3.2 6.8 L4 2.8 H5.8 M3.4 4.6 H5.2 M5 6.8 L7 3.8 M5.2 3.8 L6.8 6.8" stroke="#232323" stroke-width="0.8" fill="none"/></svg>
<div class="t" style="left:39.5px;top:245.95px;color:#c0c0c0">Radial Shadow</div>
<svg style="will-change:transform;left:26.4px;top:247.15px" width="9" height="8" viewBox="0 0 9 8"><path d="M0 1.4 H1.2 V0 H3.2 V1.4 H5.8 V0 H7.8 V1.4 H9 V8 H0 Z" fill="#c0c0c0"/><text x="4.5" y="7" font-size="6" font-weight="bold" text-anchor="middle" fill="#232323" font-family="Liberation Sans, sans-serif">8</text></svg>
<svg style="left:138px;top:260px" width="9" height="9" viewBox="0 0 9 9"><path d="M0 0 H8.6 V8.6 H3.4 L0 5.2 Z" fill="#c4c4c4"/><path d="M0 5.2 H3.4 V8.6 Z" fill="#6a6a6a"/></svg>
<div class="a" style="left:1.5px;top:275px;width:150.5px;height:18.6px;background:#252525"></div>
<div class="t" style="left:9.5px;top:279.1px;color:#b0b0b0">Preview</div>
<div class="a" style="left:1.5px;top:295.5px;width:150.5px;height:20.5px;background:#252525"></div>
<div class="t" style="left:9.5px;top:300.55px;color:#b0b0b0">Align</div>
<div class="a" style="left:1.5px;top:317.8px;width:150.5px;height:20.2px;background:#252525"></div>
<div class="t" style="left:9.5px;top:322.7px;color:#b0b0b0">Character</div>
<div class="a" style="left:1.5px;top:339.8px;width:150.5px;height:20.2px;background:#252525"></div>
<div class="t" style="left:9.5px;top:344.7px;color:#b0b0b0">Paragraph</div>
<div class="a" style="left:1.5px;top:361.8px;width:150.5px;height:20.2px;background:#252525"></div>
<div class="t" style="left:9.5px;top:366.7px;color:#b0b0b0">Tracker</div>
<div class="a" style="left:1.5px;top:383.8px;width:150.5px;height:8.2px;background:#252525"></div>
<div class="t" style="left:9.5px;top:382.7px;color:#b0b0b0"></div>
<div class="t" style="left:9.5px;top:389.5px;color:#b0b0b0;height:3px;overflow:hidden;line-height:10px">Paint</div>
<svg style="left:0;top:0" width="162" height="392" viewBox="0 0 162 392"><rect x="152.4" y="0" width="10" height="392" fill="#1d1d1d"/><path d="M152.6 5 Q152.6 1 156.6 1 H162 V296 H156.6 Q152.6 296 152.6 292 Z" fill="#2d2d2d"/></svg>
</div>

<!-- ============ TIMELINE ============ -->
<div id="timeline" class="a">
<div class="a" style="left:0;top:0;width:1024px;height:1px;background:#161616"></div>
<div class="a" style="left:393px;top:61.5px;width:616.5px;height:93.5px;background:#313131"></div>
<div class="a" style="left:393px;top:61.5px;width:4.5px;height:93.5px;background:#2b2b2b"></div>
<div class="a" style="left:391.5px;top:25px;width:1.5px;height:130px;background:#161616"></div>
<svg style="left:8.5px;top:9.3px" width="5" height="5" viewBox="0 0 5 5"><path d="M0.6 0.6 L4.4 4.4 M4.4 0.6 L0.6 4.4" stroke="#8c8c8c" stroke-width="0.9"/></svg>
<div class="a" style="left:20px;top:7.3px;width:7.2px;height:7.2px;background:#c0a67c"></div>
<div class="t" style="left:35px;top:5.5px;color:#c8c8c8">Comp 1</div>
<svg style="left:70.3px;top:8.5px" width="6.3" height="6" viewBox="0 0 6.3 6"><path d="M0 0.5 H6.3 M0 3 H6.3 M0 5.5 H6.3" stroke="#a0a0a0" stroke-width="1"/></svg>
<div class="t" style="left:10px;top:23px;font-size:11.2px;font-weight:bold;color:#2d8ceb;letter-spacing:-0.09px;height:12px;line-height:12px">0:00:19:04</div>
<div class="t" style="left:9px;top:35px;font-size:7.8px;color:#2264ac;letter-spacing:-0.22px">00574 (30.00 fps)</div>
<div class="a" style="left:75.2px;top:27.7px;width:193px;height:12.4px;background:#131313;border-radius:1px"></div>
<svg style="left:79px;top:30px" width="13" height="9" viewBox="0 0 13 9"><circle cx="5.4" cy="3.4" r="2.7" fill="none" stroke="#c0c0c0" stroke-width="1.1"/><path d="M3.4 5.4 L0.8 8.2" stroke="#c0c0c0" stroke-width="1.3"/><path d="M9 6 H12.4 L10.7 7.8 Z" fill="#c0c0c0"/></svg>
<svg style="left:280px;top:29.6px" width="13" height="10" viewBox="0 0 13 10"><path d="M0.4 1.6 H7 M4.6 1.6 V5 H7.4 M6 5 V8 H8" fill="none" stroke="#c4c4c4" stroke-width="1"/><rect x="7" y="0.4" width="3.4" height="2.4" fill="#c4c4c4"/><rect x="7.4" y="3.8" width="3.4" height="2.4" fill="#c4c4c4"/><path d="M8.6 7.4 H12 L10.3 9.4 Z" fill="#c4c4c4"/></svg>
<svg style="left:305px;top:29.6px" width="12" height="10" viewBox="0 0 12 10"><path d="M1.2 4.6 C1.2 0.4 10.8 0.4 10.8 4.6 Z" fill="#c4c4c4"/><rect x="5.4" y="0" width="1.4" height="6" fill="#c4c4c4"/><rect x="0" y="5.4" width="12" height="1.2" fill="#c4c4c4"/><rect x="0.6" y="7.2" width="10.8" height="2" fill="#c4c4c4" opacity="0.75"/></svg>
<svg style="left:324.5px;top:29px" width="12" height="11" viewBox="0 0 12 11"><path d="M0.5 2.6 V10 H8" fill="none" stroke="#c4c4c4" stroke-width="1"/><rect x="2.4" y="0.2" width="9" height="8.2" fill="#c4c4c4"/><rect x="4.6" y="1.6" width="4.6" height="2.2" fill="#6a6a6a"/></svg>
<svg style="left:343.5px;top:29px" width="12" height="11" viewBox="0 0 12 11"><circle cx="4.2" cy="6.4" r="3.6" fill="none" stroke="#c4c4c4" stroke-width="0.9"/><circle cx="5.6" cy="5.4" r="3.6" fill="none" stroke="#c4c4c4" stroke-width="0.9"/><circle cx="7.2" cy="4.2" r="3.8" fill="#c4c4c4"/></svg>
<svg style="left:367.5px;top:28.6px" width="13" height="11" viewBox="0 0 13 11"><rect x="0.5" y="1.2" width="11.6" height="9" fill="none" stroke="#c4c4c4" stroke-width="1"/><path d="M1 2 H3.4 C6 2 6 9.4 9.4 9.4 H11.6" fill="none" stroke="#c4c4c4" stroke-width="0.9"/><path d="M2.6 0 V1.2 M6.2 0 V1.2 M9.8 0 V1.2" stroke="#c4c4c4" stroke-width="0.9"/></svg>
<div class="a" style="left:0;top:47.2px;width:391.5px;height:1px;background:#161616"></div>
<div class="a" style="left:0;top:60.8px;width:391.5px;height:1px;background:#161616"></div>
<div class="a" style="left:50.4px;top:49.5px;width:1px;height:10px;background:#161616"></div>
<div class="a" style="left:74.6px;top:49.5px;width:1px;height:10px;background:#161616"></div>
<div class="a" style="left:98.2px;top:49.5px;width:1px;height:10px;background:#161616"></div>
<div class="a" style="left:194.3px;top:49.5px;width:1px;height:10px;background:#161616"></div>
<div class="a" style="left:293.6px;top:49.5px;width:1px;height:10px;background:#161616"></div>
<div class="a" style="left:380.3px;top:49.5px;width:1px;height:10px;background:#161616"></div>
<svg style="left:5.5px;top:51.6px" width="8" height="6" viewBox="0 0 8 6"><path d="M0 3 C1.6 -0.4 6.4 -0.4 8 3 C6.4 6.4 1.6 6.4 0 3 Z" fill="#b8b8b8"/><circle cx="4" cy="3" r="1.5" fill="#232323"/></svg>
<svg style="left:16px;top:50px" width="9" height="9" viewBox="0 0 9 9"><path d="M0 3 H1.8 L4.4 0.6 V8.4 L1.8 6 H0 Z" fill="#b8b8b8"/><path d="M5.6 2.4 C6.8 3.4 6.8 5.6 5.6 6.6 M6.8 1 C9 2.6 9 6.4 6.8 8" fill="none" stroke="#b8b8b8" stroke-width="0.9"/></svg>
<div class="a" style="left:28.8px;top:51.8px;width:5.4px;height:5.4px;border-radius:3px;background:#b8b8b8"></div>
<svg style="left:38.7px;top:50px" width="8" height="9" viewBox="0 0 8 9"><path d="M1.6 4 V2.6 C1.6 0.2 5.6 0.2 5.6 2.6 V4" fill="none" stroke="#b8b8b8" stroke-width="1.1"/><rect x="0.2" y="3.8" width="6.8" height="4.8" fill="#b8b8b8"/><rect x="3" y="5.2" width="1.2" height="2" fill="#232323"/></svg>
<svg style="left:61px;top:49.8px" width="10" height="9" viewBox="0 0 10 9"><path d="M0.2 0.2 H4.6 L9.4 5 L5.4 8.8 L0.2 4 Z" fill="#b8b8b8"/><circle cx="2.4" cy="2.4" r="0.9" fill="#232323"/></svg>
<div class="t" style="left:78.5px;top:48.8px;font-size:6.6px;color:#a0a0a0;font-style:italic">#</div>
<div class="t" style="left:103px;top:48.8px;font-size:7.3px;color:#a0a0a0;letter-spacing:-0.15px">Source Name</div>
<div class="t" style="left:298.7px;top:48.8px;font-size:7.3px;color:#a0a0a0;letter-spacing:-0.15px">Parent &amp; Link</div>
<svg style="left:198px;top:50.6px" width="9" height="8" viewBox="0 0 12 10"><path d="M1.2 4.6 C1.2 0.4 10.8 0.4 10.8 4.6 Z" fill="#b8b8b8"/><rect x="5.4" y="0" width="1.4" height="6" fill="#b8b8b8"/><rect x="0" y="5.4" width="12" height="1.2" fill="#b8b8b8"/><rect x="0.6" y="7.2" width="10.8" height="2" fill="#b8b8b8" opacity="0.75"/></svg>
<svg style="left:209.4px;top:50.6px" width="8" height="8" viewBox="0 0 8 8"><circle cx="4" cy="4" r="1.7" fill="none" stroke="#b8b8b8" stroke-width="1"/><path d="M4 0 V1.6 M4 6.4 V8 M0 4 H1.6 M6.4 4 H8 M1.2 1.2 L2.2 2.2 M5.8 5.8 L6.8 6.8 M6.8 1.2 L5.8 2.2 M1.2 6.8 L2.2 5.8" stroke="#b8b8b8" stroke-width="0.8"/></svg>
<svg style="left:220px;top:50.6px" width="8" height="8" viewBox="0 0 8 8"><path d="M0.4 0.4 L7.6 7.6" stroke="#b8b8b8" stroke-width="1"/></svg>
<div class="t" style="left:231px;top:48.0px;font-family:'Liberation Serif',serif;font-style:italic;font-size:10px;color:#b8b8b8;letter-spacing:-0.4px">fx</div>
<svg style="left:241.5px;top:50.6px" width="9" height="8" viewBox="0 0 9 8"><rect x="0" y="0" width="8.6" height="8" fill="#b8b8b8"/><rect x="1.8" y="1.4" width="5" height="2.4" fill="#555"/></svg>
<svg style="left:252.5px;top:50.2px" width="10" height="9" viewBox="0 0 10 9"><circle cx="3.4" cy="5.4" r="3" fill="none" stroke="#b8b8b8" stroke-width="0.8"/><circle cx="4.6" cy="4.4" r="3" fill="none" stroke="#b8b8b8" stroke-width="0.8"/><circle cx="6" cy="3.4" r="3.2" fill="#b8b8b8"/></svg>
<svg style="left:263.8px;top:50.2px" width="9" height="9" viewBox="0 0 9 9"><circle cx="4.2" cy="4.4" r="3.6" fill="#b8b8b8"/><path d="M4.2 4.4 L6.8 1.8 A3.6 3.6 0 0 1 6.8 7 Z" fill="#232323" transform="rotate(45 4.2 4.4)"/></svg>
<svg style="left:275px;top:50.2px" width="9" height="9" viewBox="0 0 9 9"><path d="M4.2 0.6 L7.8 2.4 V6.4 L4.2 8.2 L0.6 6.4 V2.4 Z M0.6 2.4 L4.2 4.2 L7.8 2.4 M4.2 4.2 V8.2" fill="none" stroke="#b8b8b8" stroke-width="0.9"/></svg>
<div class="a" style="left:0;top:62px;width:391.5px;height:11.7px;background:#444444"></div>
<svg style="left:5.5px;top:64.8px" width="8" height="6" viewBox="0 0 8 6"><path d="M0 3 C1.6 -0.4 6.4 -0.4 8 3 C6.4 6.4 1.6 6.4 0 3 Z" fill="#e6e6e6"/><circle cx="4" cy="3" r="1.5" fill="#444"/></svg>
<div class="a" style="left:26.4px;top:62.5px;width:9.6px;height:10.6px;background:#323232"></div>
<div class="a" style="left:37.5px;top:62.5px;width:9.5px;height:10.6px;background:#323232"></div>
<svg style="left:55.3px;top:64.3px" width="5" height="7" viewBox="0 0 5 7"><path d="M0.8 0.6 L3.6 3.5 L0.8 6.4" fill="none" stroke="#b4b4b4" stroke-width="1"/></svg>
<div class="a" style="left:64px;top:63.4px;width:8.8px;height:8.8px;background:#6d7be3"></div>
<div class="t" style="left:79.5px;top:62.3px;color:#e0e0e0">1</div>
<svg style="left:101px;top:63.3px" width="9" height="9" viewBox="0 0 9 9"><path d="M4.4 0 L5.6 3.1 L8.8 3.3 L6.3 5.4 L7.1 8.6 L4.4 6.8 L1.7 8.6 L2.5 5.4 L0 3.3 L3.2 3.1 Z" fill="#e0e0e0"/></svg>
<div class="a" style="left:112.3px;top:62.5px;width:81px;height:10.8px;background:#a4a4a4"></div>
<div class="t" style="left:114.8px;top:62.4px;color:#141414;letter-spacing:-0.05px">Shape Layer 1</div>
<svg style="left:198px;top:64px" width="9" height="8" viewBox="0 0 12 10"><path d="M1.2 4.6 C1.2 0.4 10.8 0.4 10.8 4.6 Z" fill="#d8d8d8"/><rect x="5.4" y="0" width="1.4" height="6" fill="#d8d8d8"/><rect x="0" y="5.4" width="12" height="1.2" fill="#d8d8d8"/><rect x="0.6" y="7.2" width="10.8" height="2" fill="#d8d8d8" opacity="0.75"/></svg>
<svg style="left:209.4px;top:64px" width="8" height="8" viewBox="0 0 8 8"><circle cx="4" cy="4" r="1.7" fill="none" stroke="#7a7a7a" stroke-width="1"/><path d="M4 0 V1.6 M4 6.4 V8 M0 4 H1.6 M6.4 4 H8 M1.2 1.2 L2.2 2.2 M5.8 5.8 L6.8 6.8 M6.8 1.2 L5.8 2.2 M1.2 6.8 L2.2 5.8" stroke="#7a7a7a" stroke-width="0.8"/></svg>
<svg style="left:220px;top:64px" width="8" height="8" viewBox="0 0 8 8"><path d="M0.4 7.6 L7.6 0.4" stroke="#d8d8d8" stroke-width="1"/></svg>
<div class="t" style="left:231px;top:61.4px;font-family:'Liberation Serif',serif;font-style:italic;font-size:10px;color:#d8d8d8;letter-spacing:-0.4px">fx</div>
<div class="a" style="left:240.6px;top:62.5px;width:10.2px;height:10.6px;background:#3a3a3a"></div>
<div class="a" style="left:251.7px;top:62.5px;width:10.2px;height:10.6px;background:#3a3a3a"></div>
<div class="a" style="left:262.8px;top:62.5px;width:10.2px;height:10.6px;background:#3a3a3a"></div>
<div class="a" style="left:273.9px;top:62.5px;width:10.2px;height:10.6px;background:#3a3a3a"></div>
<svg style="left:298px;top:63.2px" width="9" height="9" viewBox="0 0 9 9"><path d="M4.6 5 C4.6 3.6 6.6 3.8 6.4 5.4 C6.2 7.4 3 7.4 2.8 4.8 C2.6 2 6.8 1.2 8 4 C9 7 5.4 9.4 2.6 8 C-0.2 6.4 0 2.2 3 0.8" fill="none" stroke="#b4b4b4" stroke-width="0.8"/></svg>
<div class="a" style="left:311.4px;top:62.1px;width:65.6px;height:11.4px;background:#1b1b1b"></div>
<div class="t" style="left:316.7px;top:62.4px;color:#e4e4e4">None</div>
<svg style="left:368px;top:66px" width="6" height="5" viewBox="0 0 6 5"><path d="M0.6 0.8 L3 3.4 L5.4 0.8" fill="none" stroke="#c8c8c8" stroke-width="1"/></svg>
<div class="a" style="left:392.5px;top:25px;width:616.5px;height:36.5px;background:#161616"></div>
<div class="a" style="left:397.3px;top:26px;width:606.6px;height:5.8px;background:#686868"></div>
<div class="a" style="left:392.8px;top:26px;width:4.5px;height:5.8px;background:#2d8ceb;border-radius:3px 0 0 3px"></div>
<div class="a" style="left:1003.9px;top:26px;width:4.9px;height:5.8px;background:#2d8ceb;border-radius:0 3px 3px 0"></div>
<div class="a" style="left:393px;top:33.4px;width:616.4px;height:12.8px;background:#232323"></div>
<div class="t" style="left:393px;top:32.6px;font-size:7.6px;color:#b4b4b4;letter-spacing:-0.2px;width:16px;overflow:hidden"><span style="margin-left:-2.2px">0:00s</span></div>
<div class="a" style="left:397.4px;top:43.3px;width:1px;height:3px;background:#8a8a8a"></div>
<div class="t" style="left:455.7px;top:32.6px;font-size:7.6px;color:#b4b4b4;letter-spacing:-0.2px">02s</div>
<div class="a" style="left:460.8px;top:43.3px;width:1px;height:3px;background:#8a8a8a"></div>
<div class="t" style="left:519.2px;top:32.6px;font-size:7.6px;color:#b4b4b4;letter-spacing:-0.2px">04s</div>
<div class="a" style="left:524.3px;top:43.3px;width:1px;height:3px;background:#8a8a8a"></div>
<div class="t" style="left:582.6px;top:32.6px;font-size:7.6px;color:#b4b4b4;letter-spacing:-0.2px">06s</div>
<div class="a" style="left:587.7px;top:43.3px;width:1px;height:3px;background:#8a8a8a"></div>
<div class="t" style="left:646.0px;top:32.6px;font-size:7.6px;color:#b4b4b4;letter-spacing:-0.2px">08s</div>
<div class="a" style="left:651.1px;top:43.3px;width:1px;height:3px;background:#8a8a8a"></div>
<div class="t" style="left:709.4px;top:32.6px;font-size:7.6px;color:#b4b4b4;letter-spacing:-0.2px">10s</div>
<div class="a" style="left:714.5px;top:43.3px;width:1px;height:3px;background:#8a8a8a"></div>
<div class="t" style="left:772.9px;top:32.6px;font-size:7.6px;color:#b4b4b4;letter-spacing:-0.2px">12s</div>
<div class="a" style="left:778.0px;top:43.3px;width:1px;height:3px;background:#8a8a8a"></div>
<div class="t" style="left:836.3px;top:32.6px;font-size:7.6px;color:#b4b4b4;letter-spacing:-0.2px">14s</div>
<div class="a" style="left:841.4px;top:43.3px;width:1px;height:3px;background:#8a8a8a"></div>
<div class="t" style="left:899.7px;top:32.6px;font-size:7.6px;color:#b4b4b4;letter-spacing:-0.2px">16s</div>
<div class="a" style="left:904.8px;top:43.3px;width:1px;height:3px;background:#8a8a8a"></div>
<div class="t" style="left:963.2px;top:32.6px;font-size:7.6px;color:#b4b4b4;letter-spacing:-0.2px">18s</div>
<div class="a" style="left:968.3px;top:43.3px;width:1px;height:3px;background:#8a8a8a"></div>
<div class="a" style="left:397.3px;top:47.3px;width:606.4px;height:10.6px;background:#676767"></div>
<div class="a" style="left:392.8px;top:47.3px;width:4.5px;height:10.6px;background:#2d8ceb;border-radius:3px 0 0 3px"></div>
<div class="a" style="left:1004.2px;top:47.3px;width:4.6px;height:10.6px;background:#2d8ceb;border-radius:0 3px 3px 0"></div>
<div class="a" style="left:571.4px;top:58.8px;width:6.2px;height:2.2px;background:#12b43c"></div>
<div class="a" style="left:393px;top:61.6px;width:616.4px;height:12.2px;background:#484848"></div>
<div class="a" style="left:397.5px;top:61.8px;width:606.3px;height:12px;background:linear-gradient(#6b78d8 0,#5a68cc 30%,#4d5bbf 100%)"></div>
<div class="a" style="left:417.7px;top:64.5px;width:11px;height:10px;border:1px solid rgba(40,60,140,0.28)"></div>
<div class="a" style="left:430.6px;top:64.5px;width:87px;height:10px;border:1px solid rgba(40,60,140,0.28)"></div>
<div class="a" style="left:1009.4px;top:25px;width:14.6px;height:130px;background:#232323"></div>
<div class="a" style="left:1009.4px;top:61px;width:13px;height:12.4px;background:#2a2a2a;border-top:1px solid #161616"></div>
<div class="a" style="left:1009px;top:25px;width:1px;height:130px;background:#161616"></div>
<svg style="left:1012.3px;top:49px" width="9" height="10" viewBox="0 0 9 10"><path d="M0 0 H8.4 V5.6 L4.2 9.8 L0 5.6 Z" fill="#b8b8b8"/></svg>
<svg style="left:1010px;top:63.6px" width="11" height="9" viewBox="0 0 11 9"><path d="M0.4 4.6 L5 0.4 V3 H10.4 V6.4 H5.4 Z" fill="#d0d0d0"/><circle cx="4.4" cy="6" r="2.2" fill="#2a2a2a" stroke="#d0d0d0" stroke-width="0.9"/></svg>
<div class="a" style="left:1003.4px;top:43px;width:1px;height:112px;background:#2d8ceb"></div>
<svg style="left:999.7px;top:36.2px" width="9" height="10" viewBox="0 0 9 10"><path d="M0 0 H8.6 V4 L4.3 9.4 L0 4 Z" fill="#2d8ceb"/><path d="M4.3 4 V8" stroke="#1a3c6a" stroke-width="0.7"/></svg>
<div class="a" style="left:1022.4px;top:0;width:1.6px;height:155px;background:#3c3428"></div>
</div>

<!-- ============ ARROW ============ -->
<svg id="arrow" class="a" style="left:0;top:0" width="1024" height="567" viewBox="0 0 1024 567">
<line x1="895" y1="167" x2="531" y2="471.6" stroke="#08f016" stroke-width="2.6"/>
<polygon points="520.6,480.5 531.2,465.6 537.4,472" fill="#08f016"/>
</svg>
</body></html>
